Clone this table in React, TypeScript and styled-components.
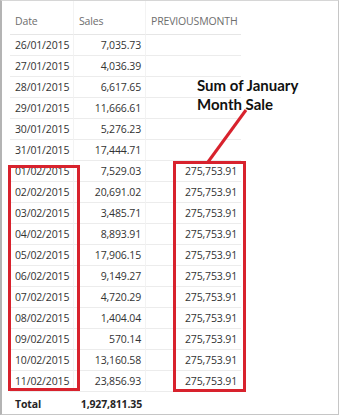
import React from "react";
import styled, { createGlobalStyle } from "styled-components";

const Global = createGlobalStyle`
  html, body { margin: 0; padding: 0; background: #ffffff; }
  body { font-family: "Open Sans", "Noto Sans", sans-serif; }
`;

const Page = styled.div`
  position: relative;
  width: 343px;
  height: 419px;
  background: #ffffff;
`;

const Panel = styled.div`
  box-sizing: border-box;
  width: 339px;
  height: 415px;
  border-left: 2px solid #b4b4b4;
  border-top: 1px solid #d6d6d6;
  border-right: 1px solid #c6c6c6;
  border-bottom: 1px solid #c6c6c6;
  padding-left: 8px;
`;

const Table = styled.div<{ $rows: number }>`
  display: grid;
  grid-template-columns: 64px 72px 95px;
  grid-template-rows: 34px repeat(${(p) => p.$rows}, 21px) 22px;
  width: 231px;
  font-size: 10.5px;
  letter-spacing: -0.15px;
  color: #333333;
`;

const Cell = styled.div<{ $align?: "left" | "right"; $last?: boolean }>`
  box-sizing: border-box;
  display: flex;
  align-items: center;
  justify-content: ${(p) => (p.$align === "right" ? "flex-end" : "flex-start")};
  padding: ${(p) => (p.$align === "right" ? "0 4px 0 0" : "0 0 0 5px")};
  border-bottom: 1px solid #ececec;
  border-right: ${(p) => (p.$last ? "none" : "1px solid #f3f3f3")};
  white-space: nowrap;
`;

const HeadCell = styled(Cell)`
  align-items: flex-end;
  padding-bottom: 6px;
  color: #6e6e6e;
  border-bottom: 1px solid #e6e6e6;
`;

const TotalCell = styled(Cell)`
  font-weight: 700;
  color: #252525;
  border-bottom: none;
  border-right: none;
  padding-top: 1px;
`;

const HighlightBox = styled.div<{ $x: number; $y: number; $w: number; $h: number }>`
  position: absolute;
  box-sizing: border-box;
  left: ${(p) => p.$x}px;
  top: ${(p) => p.$y}px;
  width: ${(p) => p.$w}px;
  height: ${(p) => p.$h}px;
  border: 3px solid #d8222d;
`;

const Callout = styled.div`
  position: absolute;
  left: 197px;
  top: 76px;
  font-family: "Lato", "Open Sans", sans-serif;
  font-weight: 700;
  font-size: 15px;
  line-height: 19px;
  color: #111111;
  white-space: nowrap;
`;

const Pointer = styled.svg`
  position: absolute;
  left: 0;
  top: 0;
  pointer-events: none;
`;

const rows: [string, string, string][] = [
  ["26/01/2015", "7,035.73", ""],
  ["27/01/2015", "4,036.39", ""],
  ["28/01/2015", "6,617.65", ""],
  ["29/01/2015", "11,666.61", ""],
  ["30/01/2015", "5,276.23", ""],
  ["31/01/2015", "17,444.71", ""],
  ["01/02/2015", "7,529.03", "275,753.91"],
  ["02/02/2015", "20,691.02", "275,753.91"],
  ["03/02/2015", "3,485.71", "275,753.91"],
  ["04/02/2015", "8,893.91", "275,753.91"],
  ["05/02/2015", "17,906.15", "275,753.91"],
  ["06/02/2015", "9,149.27", "275,753.91"],
  ["07/02/2015", "4,720.29", "275,753.91"],
  ["08/02/2015", "1,404.04", "275,753.91"],
  ["09/02/2015", "570.14", "275,753.91"],
  ["10/02/2015", "13,160.58", "275,753.91"],
  ["11/02/2015", "23,856.93", "275,753.91"],
];

export default function App() {
  return (
    <Page>
      <Global />
      <Panel>
        <Table $rows={rows.length}>
          <HeadCell>Date</HeadCell>
          <HeadCell>Sales</HeadCell>
          <HeadCell $last>PREVIOUSMONTH</HeadCell>
          {rows.map(([d, s, p]) => (
            <React.Fragment key={d}>
              <Cell>{d}</Cell>
              <Cell $align="right">{s}</Cell>
              <Cell $align="right" $last>
                {p}
              </Cell>
            </React.Fragment>
          ))}
          <TotalCell>Total</TotalCell>
          <TotalCell $align="right">1,927,811.35</TotalCell>
          <TotalCell $last />
        </Table>
      </Panel>
      <HighlightBox $x={8} $y={165} $w={72} $h={226} />
      <HighlightBox $x={173} $y={161} $w={73} $h={231} />
      <Callout>
        Sum of January
        <br />
        Month Sale
      </Callout>
      <Pointer width="343" height="419" viewBox="0 0 343 419">
        <line x1="246" y1="110" x2="208" y2="162" stroke="#d8222d" strokeWidth="3" />
      </Pointer>
    </Page>
  );
}
